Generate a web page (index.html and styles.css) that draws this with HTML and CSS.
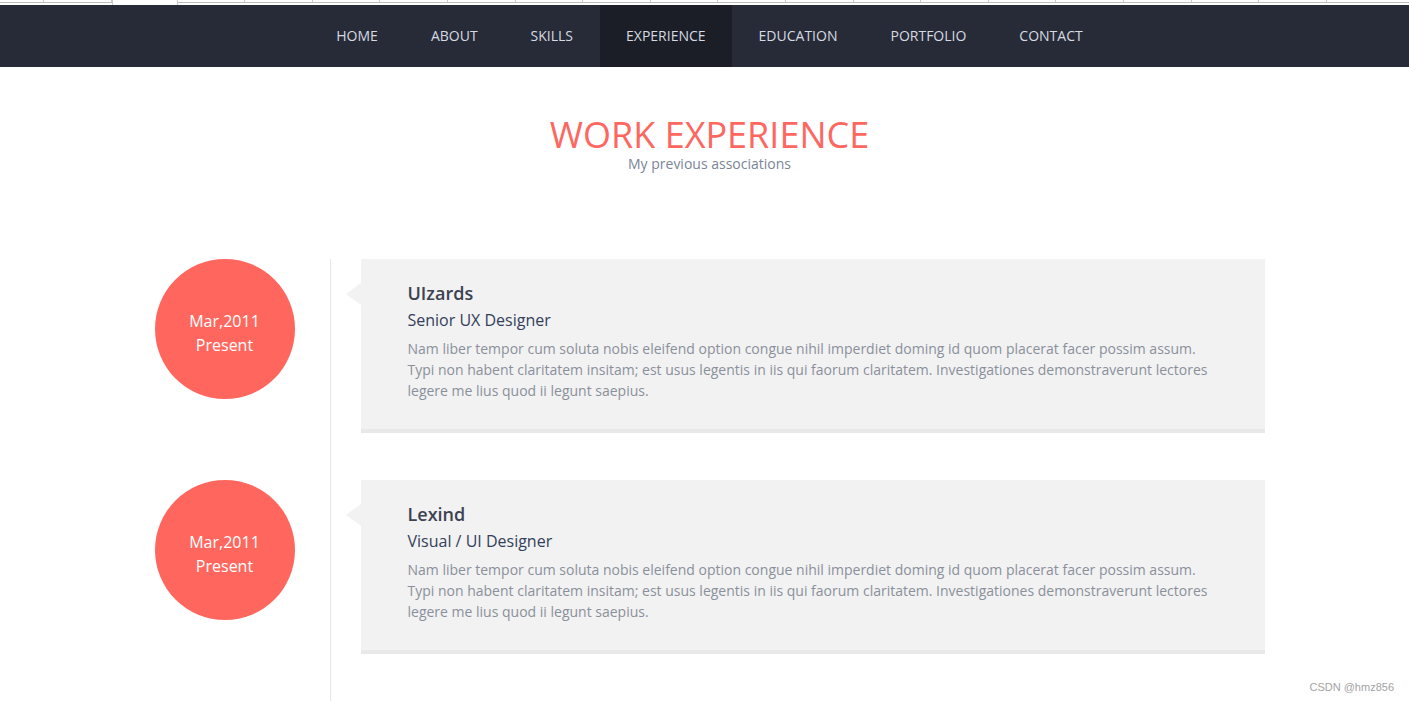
FILE: index.html
```html
<!DOCTYPE html>
<html>
<head>
	<meta charset="utf-8">
	<meta name="viewport" content="width=device-width, initial-scale=1">
	<title>Work Experience</title>
	<link rel="stylesheet" href="styles.css">
</head>
<body>
	<div class="tabstrip">
		<span class="tab"></span>
		<span class="tab"></span>
		<span class="tab active"></span>
		<span class="tab"></span>
		<span class="tab"></span>
		<span class="tab"></span>
		<span class="tab"></span>
		<span class="tab"></span>
		<span class="tab"></span>
		<span class="tab"></span>
		<span class="tab"></span>
		<span class="tab"></span>
		<span class="tab"></span>
		<span class="tab"></span>
		<span class="tab"></span>
		<span class="tab"></span>
		<span class="tab"></span>
		<span class="tab"></span>
		<span class="tab"></span>
		<span class="tab"></span>
		<span class="tab last"></span>
	</div>

	<nav class="topnav">
		<ul class="menu">
			<li><a href="#">Home</a></li>
			<li><a href="#">About</a></li>
			<li><a href="#">Skills</a></li>
			<li class="current"><a href="#">Experience</a></li>
			<li><a href="#">Education</a></li>
			<li><a href="#">Portfolio</a></li>
			<li><a href="#">Contact</a></li>
		</ul>
	</nav>

	<section class="experience">
		<div class="container">
			<header class="section-head">
				<h2>Work Experience</h2>
				<p>My previous associations</p>
			</header>

			<div class="timeline">
				<div class="item">
					<div class="date">
						<div class="circle">Mar,2011<br>Present</div>
					</div>
					<div class="track">
						<div class="card">
							<h3>UIzards</h3>
							<h4>Senior UX Designer</h4>
							<p>Nam liber tempor cum soluta nobis eleifend option congue nihil imperdiet doming id quom placerat facer possim assum. Typi non habent claritatem insitam; est usus legentis in iis qui faorum claritatem. Investigationes demonstraverunt lectores legere me lius quod ii legunt saepius.</p>
						</div>
					</div>
				</div>

				<div class="item">
					<div class="date">
						<div class="circle">Mar,2011<br>Present</div>
					</div>
					<div class="track">
						<div class="card">
							<h3>Lexind</h3>
							<h4>Visual / UI Designer</h4>
							<p>Nam liber tempor cum soluta nobis eleifend option congue nihil imperdiet doming id quom placerat facer possim assum. Typi non habent claritatem insitam; est usus legentis in iis qui faorum claritatem. Investigationes demonstraverunt lectores legere me lius quod ii legunt saepius.</p>
						</div>
					</div>
				</div>
			</div>
		</div>
	</section>

	<div class="watermark">CSDN @hmz856</div>
</body>
</html>
```

FILE: styles.css
```css
body{
	margin: 0px;
	padding: 0px;
	background: #fff;
	font-family: "Open Sans", "Liberation Sans", sans-serif;
	height: 701px;
	overflow: hidden;
	position: relative;
}

/* little strip of tabs above the page */
.tabstrip{
	display: flex;
	height: 5px;
	overflow: hidden;
}

.tab{
	flex: 0 0 67.6px;
	box-sizing: border-box;
	height: 3px;
	border-right: 1px solid #c9c9c9;
	border-bottom: 1px solid #bdbdbd;
}

.tab:first-child{
	flex-basis: 44px;
}

.tab.active{
	flex-basis: 66px;
	height: 5px;
	border-bottom: none;
	border-left: 1px solid #c9c9c9;
}

.tab.last{
	flex: 1;
	border-right: none;
}

.topnav{
	background: #272b37;
	height: 62px;
}

.menu{
	list-style: none;
	margin: 0px;
	padding: 0px 0px 0px 10px;
	display: flex;
	justify-content: center;
}

.menu li a{
	display: block;
	padding: 0px 26.5px;
	line-height: 62px;
	font-size: 14px;
	text-transform: uppercase;
	color: #d6dae2;
	text-decoration: none;
}

.menu li.current a{
	background: #1b1e26;
}

.container{
	width: 1110px;
	margin-left: calc(50% - 550px);
}

.section-head{
	text-align: center;
	padding-top: 49px;
	margin-bottom: 85px;
}

.section-head h2{
	margin: 0px;
	font-size: 36px;
	line-height: 38px;
	font-weight: normal;
	text-transform: uppercase;
	color: #fe675f;
}

.section-head p{
	margin: 0px;
	font-size: 14px;
	line-height: 20px;
	color: #7b8597;
}

.item{
	display: flex;
}

.date{
	flex: 0 0 175px;
}

.circle{
	width: 140px;
	height: 140px;
	border-radius: 50%;
	background: #ff675e;
	color: #fff;
	font-size: 16px;
	line-height: 24px;
	text-align: center;
	display: flex;
	align-items: center;
	justify-content: center;
	padding-top: 8px;
	box-sizing: border-box;
}

.track{
	flex: 1;
	border-left: 1px solid #e6e6e6;
	padding-left: 30px;
	padding-bottom: 47px;
}

.card{
	position: relative;
	background: #f2f2f2;
	border-bottom: 4px solid #e8e8e8;
	padding: 22px 47px 28px 47px;
}

.card:before{
	content: '';
	position: absolute;
	left: -15px;
	top: 24px;
	border-right: 15px solid #f2f2f2;
	border-top: 11px solid transparent;
	border-bottom: 11px solid transparent;
}

.card h3{
	margin: 0px;
	font-size: 18px;
	line-height: 24px;
	font-weight: 600;
	color: #3b4250;
}

.card h4{
	margin: 4px 0px 0px 0px;
	font-size: 16px;
	line-height: 22px;
	font-weight: normal;
	color: #33405a;
}

.card p{
	margin: 7px 0px 0px 0px;
	font-size: 14px;
	line-height: 21px;
	color: #8a909b;
}

.watermark{
	position: absolute;
	right: 15px;
	bottom: 8px;
	font-family: "Liberation Sans", Arial, sans-serif;
	font-size: 11px;
	color: #a3a3a3;
}
```
